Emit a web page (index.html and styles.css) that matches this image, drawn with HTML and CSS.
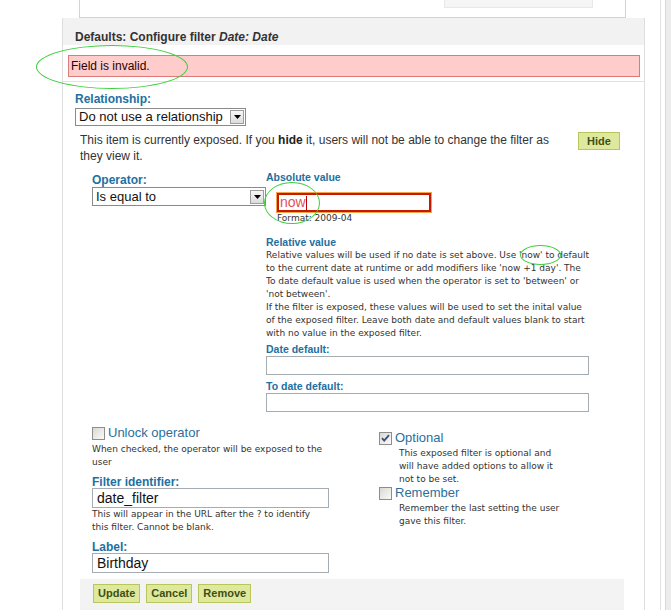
FILE: index.html
```html
<!DOCTYPE html>
<html>
<head>
<meta charset="utf-8">
<link rel="stylesheet" href="styles.css">
</head>
<body>
<div class="frame">
  <div class="main">
    <div class="top-box"><div class="top-inner"></div></div>
    <div class="panel">
      <div class="panel-head">Defaults: Configure filter <em>Date: Date</em></div>
      <div class="error">Field is invalid.</div>
      <div class="divider"></div>
      <div class="panel-body">
        <div class="label">Relationship:</div>
        <div class="select sel-rel"><span class="sel-text">Do not use a relationship</span><span class="sel-btn"><svg width="7" height="4" viewBox="0 0 7 4"><path d="M0 0h7L3.5 4z" fill="#000"/></svg></span></div>

        <div class="exposed">
          <p class="exposed-text">This item is currently exposed. If you <b>hide</b> it, users will not be able to change the filter as they view it.</p>
          <span class="btn btn-hide">Hide</span>
        </div>

        <div class="filter-row">
          <div class="operator">
            <div class="label">Operator:</div>
            <div class="select sel-op"><span class="sel-text">Is equal to</span><span class="sel-btn"><svg width="7" height="4" viewBox="0 0 7 4"><path d="M0 0h7L3.5 4z" fill="#000"/></svg></span></div>
          </div>
          <div class="value">
            <div class="small-label">Absolute value</div>
            <div class="abs-input"><span class="now">now</span><span class="caret"></span></div>
            <div class="desc format">Format: 2009-04</div>
            <div class="small-label rel-label">Relative value</div>
            <p class="desc rel-text">Relative values will be used if no date is set above. Use 'now' to default<br>to the current date at runtime or add modifiers like 'now +1 day'. The<br>To date default value is used when the operator is set to 'between' or<br>'not between'.<br>If the filter is exposed, these values will be used to set the inital value<br>of the exposed filter. Leave both date and default values blank to start<br>with no value in the exposed filter.</p>
            <div class="small-label date-label">Date default:</div>
            <div class="text-input wide"></div>
            <div class="small-label date-label2">To date default:</div>
            <div class="text-input wide"></div>
          </div>
        </div>

        <div class="options-row">
          <div class="opt-left">
            <div class="check-row">
              <svg class="cb" width="13" height="13" viewBox="0 0 13 13"><defs><linearGradient id="g1" x1="0" y1="0" x2="1" y2="1"><stop offset="0" stop-color="#d8d8d2"/><stop offset="1" stop-color="#fbfbfa"/></linearGradient></defs><rect x="0.5" y="0.5" width="12" height="12" fill="url(#g1)" stroke="#8d8d8d"/></svg>
              <span class="check-label">Unlock operator</span>
            </div>
            <div class="desc unlock-desc">When checked, the operator will be exposed to the user</div>
            <div class="label fid-label">Filter identifier:</div>
            <div class="text-input mid"><span>date_filter</span></div>
            <div class="desc fid-desc">This will appear in the URL after the ? to identify this filter. Cannot be blank.</div>
            <div class="label lab-label">Label:</div>
            <div class="text-input mid"><span>Birthday</span></div>
          </div>
          <div class="opt-right">
            <div class="check-row">
              <svg class="cb" width="13" height="13" viewBox="0 0 13 13"><defs><linearGradient id="g2" x1="0" y1="0" x2="1" y2="1"><stop offset="0" stop-color="#d8d8d2"/><stop offset="1" stop-color="#fbfbfa"/></linearGradient></defs><rect x="0.5" y="0.5" width="12" height="12" fill="url(#g2)" stroke="#8d8d8d"/><path d="M3 6.2l2.2 2.4L10 3.2" fill="none" stroke="#3b4f78" stroke-width="1.8"/></svg>
              <span class="check-label">Optional</span>
            </div>
            <div class="desc opt-desc">This exposed filter is optional and will have added options to allow it not to be set.</div>
            <div class="check-row">
              <svg class="cb" width="13" height="13" viewBox="0 0 13 13"><defs><linearGradient id="g3" x1="0" y1="0" x2="1" y2="1"><stop offset="0" stop-color="#d8d8d2"/><stop offset="1" stop-color="#fbfbfa"/></linearGradient></defs><rect x="0.5" y="0.5" width="12" height="12" fill="url(#g3)" stroke="#8d8d8d"/></svg>
              <span class="check-label">Remember</span>
            </div>
            <div class="desc opt-desc">Remember the last setting the user gave this filter.</div>
          </div>
        </div>

        <div class="buttons">
          <span class="btn">Update</span>
          <span class="btn">Cancel</span>
          <span class="btn">Remove</span>
        </div>
      </div>
    </div>
  </div>
  <div class="scroll"></div>
</div>
<div class="mark mark-error"></div>
<div class="mark mark-now"></div>
<div class="mark mark-rel"></div>
</body>
</html>
```
FILE: styles.css
```css
html, body { margin: 0; padding: 0; background: #fff; }
body {
  font-family: "Liberation Sans", Arial, sans-serif;
  color: #333;
  position: relative;
  height: 610px;
  overflow: hidden;
}
.frame { display: flex; height: 610px; }
.main {
  width: 662px;
  box-sizing: border-box;
  border-right: 1px solid #e2e2e2;
}
.scroll {
  margin-left: 4px;
  width: 5px;
  background: #ececec;
  border-left: 1px solid #d8d8d8;
}
.top-box {
  margin-left: 79px;
  width: 547px;
  height: 18px;
  box-sizing: border-box;
  border: 1px solid #d3d3d3;
  border-top: 0;
  display: flex;
  justify-content: flex-end;
  padding-right: 32px;
}
.top-inner {
  width: 147px;
  height: 7px;
  background: #f5f5f5;
  border: 1px solid #e8e8e8;
  border-top: 0;
}
.panel {
  margin-left: 62px;
  width: 583px;
  box-sizing: border-box;
  border-left: 1px solid #dedede;
  border-right: 1px solid #dedede;
  height: 592px;
}
.panel-head {
  background: #f2f2f2;
  padding: 12px 0 0 12px;
  font-size: 12px;
  line-height: 15px;
  font-weight: bold;
  color: #333;
}
.panel-head em { font-style: italic; }
.error {
  margin: 10px 4px 0 5px;
  background: #ffcccc;
  border: 1px solid #dd7b7b;
  padding: 3px 2px;
  font-size: 12px;
  line-height: 14px;
  color: #2a0000;
}
.divider { margin-top: 4px; border-top: 1px solid #e2e2e2; }
.panel-body { padding: 10px 0 0 12px; }
.label {
  font-size: 12px;
  line-height: 14px;
  font-weight: bold;
  color: #22709f;
}
.select {
  display: flex;
  align-items: center;
  box-sizing: border-box;
  height: 18px;
  border: 1px solid #8a8a8a;
  background: #fff;
  margin-top: 2px;
}
.sel-rel { width: 171px; }
.sel-op { width: 174px; margin-top: 0; height: 19px; }
.sel-text {
  flex: 1;
  font-size: 13px;
  line-height: 16px;
  color: #111;
  padding-left: 3px;
  white-space: nowrap;
}
.sel-btn {
  width: 14px;
  height: 14px;
  margin-right: 1px;
  box-sizing: border-box;
  border: 1px solid #9d9d9d;
  background: linear-gradient(#f7f7f7, #dcdcdc);
  display: flex;
  align-items: center;
  justify-content: center;
}
.exposed {
  display: flex;
  align-items: flex-start;
  margin: 6px 0 0 5px;
}
.exposed-text {
  margin: 0;
  width: 480px;
  font-size: 12px;
  line-height: 16px;
  color: #333;
}
.exposed-text b { color: #222; }
.btn {
  display: inline-block;
  box-sizing: border-box;
  height: 19px;
  padding: 0 4px;
  background: #dfe99e;
  border: 1px solid #b9c65d;
  font-size: 11px;
  line-height: 17px;
  font-weight: bold;
  color: #3f4f12;
}
.btn-hide {
  margin: 0 24px 0 auto;
  width: 42px;
  height: 18px;
  text-align: center;
}
.filter-row {
  display: flex;
  align-items: flex-start;
  margin: 7px 0 0 17px;
}
.operator { width: 174px; padding-top: 2px; }
.value { width: 340px; }
.small-label {
  font-size: 10.5px;
  line-height: 13px;
  font-weight: bold;
  color: #22709f;
}
.abs-input {
  margin: 9px 0 0 11px;
  width: 154px;
  height: 19px;
  box-sizing: border-box;
  border: 2px solid #c41a00;
  box-shadow: 0 0 0 1px #f5a44a;
  display: flex;
  align-items: center;
  padding-left: 1px;
}
.now { font-size: 14px; color: #e2535b; line-height: 15px; }
.caret { width: 1px; height: 14px; background: #b00; }
.desc {
  font-family: "DejaVu Sans", Verdana, sans-serif;
  font-size: 9px;
  line-height: 13px;
  color: #333;
}
.format { margin-left: 11px; }
.rel-label { margin-top: 11px; }
.rel-text { margin: 0; white-space: nowrap; }
.date-label { margin-top: 3px; }
.date-label2 { margin-top: 5px; }
.text-input {
  box-sizing: border-box;
  height: 19px;
  border: 1px solid #a5acb2;
  background: #fff;
  display: flex;
  align-items: center;
  padding-left: 4px;
  font-size: 14px;
  color: #111;
}
.wide { width: 323px; }
.mid { width: 237px; height: 20px; }
.options-row {
  display: flex;
  align-items: flex-start;
  margin: 14px 0 0 17px;
}
.opt-left { width: 238px; }
.opt-right { margin-left: 49px; padding-top: 5px; width: 190px; }
.check-row {
  display: flex;
  align-items: center;
  height: 14px;
}
.cb { display: block; flex: none; }
.check-label {
  margin-left: 3px;
  font-size: 13px;
  line-height: 14px;
  color: #2a6f9d;
}
.unlock-desc { margin-top: 3px; }
.fid-label { margin-top: 7px; line-height: 12px; }
.fid-desc { margin-top: 0; width: 232px; }
.lab-label { margin-top: 7px; line-height: 12px; }
.opt-desc { padding-left: 20px; width: 166px; margin-top: 2px; }
.buttons {
  margin: 6px 0 0 5px;
  width: 544px;
  height: 40px;
  background: #f3f3f3;
  padding: 5px 0 0 13px;
  box-sizing: border-box;
  display: flex;
  gap: 6px;
}
.mark {
  position: absolute;
  border: 1px solid #3ccf3c;
  border-radius: 50%;
}
.mark-error { left: 36px; top: 45px; width: 150px; height: 42px; }
.mark-now { left: 264px; top: 182px; width: 54px; height: 40px; }
.mark-rel { left: 520px; top: 245px; width: 39px; height: 18px; }
```
